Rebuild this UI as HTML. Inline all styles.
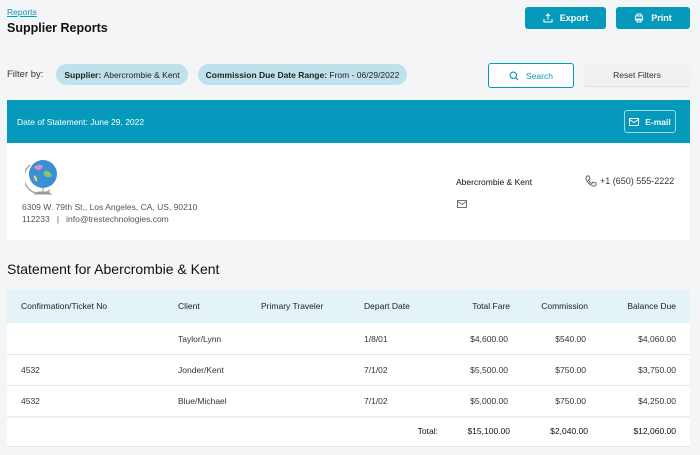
<!DOCTYPE html>
<html><head><style>
*{margin:0;padding:0;box-sizing:border-box}
body{width:700px;height:455px;background:#f4f5f7;font-family:"Liberation Sans",sans-serif;position:relative;overflow:hidden;color:#222}
.a{position:absolute;white-space:nowrap}
.btn{position:absolute;background:#0599bc;color:#fff;border-radius:3px;font-size:9px;font-weight:bold;display:flex;align-items:center;justify-content:center;gap:7px}
.chip{position:absolute;top:64px;height:21px;background:#bfe1ec;border-radius:11px;font-size:8.5px;display:flex;align-items:center;justify-content:center;color:#222}
.t{font-size:8.5px;color:#333}
.r{text-align:right}
.line{position:absolute;left:7px;width:683px;height:1px;background:#e4e7ea}
</style></head><body>
<div class="a" style="left:7px;top:7px;font-size:8.5px;color:#0599bc;text-decoration:underline">Reports</div>
<div class="a" style="left:7px;top:21px;font-size:12.5px;font-weight:bold;color:#111">Supplier Reports</div>
<div class="btn" style="left:525px;top:7px;width:81px;height:22px"><svg width="10" height="10" viewBox="0 0 10 10" fill="none" stroke="#fff" stroke-width="1"><path d="M5 7V1M3 3L5 1L7 3M1 6V9H9V6"/></svg>Export</div>
<div class="btn" style="left:616px;top:7px;width:74px;height:22px"><svg width="10" height="10" viewBox="0 0 10 10" fill="none" stroke="#fff" stroke-width="1"><path d="M3 3V1H7V3M1.5 3H8.5V7H1.5ZM3 6H7V9H3Z"/></svg>Print</div>
<div class="a" style="left:7px;top:69px;font-size:9.5px;color:#333">Filter by:</div>
<div class="chip" style="left:56px;width:132px"><b>Supplier:</b>&nbsp;Abercrombie &amp; Kent</div>
<div class="chip" style="left:198px;width:209px"><b>Commission Due Date Range:</b>&nbsp;From - 06/29/2022</div>
<div class="a" style="left:488px;top:63px;width:86px;height:25px;border:1.3px solid #0599bc;border-radius:3px;background:#fff;color:#0599bc;font-size:8.5px;display:flex;align-items:center;justify-content:center;gap:7px"><svg width="10" height="10" viewBox="0 0 10 10" fill="none" stroke="#0599bc" stroke-width="1.1"><circle cx="4.3" cy="4.3" r="3.2"/><path d="M6.7 6.7L9 9"/></svg>Search</div>
<div class="a" style="left:584px;top:64px;width:106px;height:22px;background:#f0f1f3;border-radius:3px;box-shadow:0 1px 1px #ddd;font-size:8.5px;display:flex;align-items:center;justify-content:center;color:#333">Reset Filters</div>
<div class="a" style="left:7px;top:100px;width:683px;height:43px;background:#0599bc"></div>
<div class="a" style="left:17px;top:117px;font-size:8.5px;color:#fff">Date of Statement: June 29, 2022</div>
<div class="a" style="left:624px;top:110px;width:52px;height:23px;border:1px solid #9fd6e6;border-radius:3px;color:#fff;font-size:8.5px;font-weight:bold;display:flex;align-items:center;justify-content:center;gap:6px"><svg width="10" height="8" viewBox="0 0 10 8" fill="none" stroke="#fff" stroke-width="1"><rect x=".5" y=".5" width="9" height="7"/><path d="M.5 1.5L5 4.5L9.5 1.5"/></svg>E-mail</div>
<div class="a" style="left:7px;top:143px;width:683px;height:97px;background:#fff"></div>
<svg class="a" style="left:25px;top:157px" width="34" height="40" viewBox="0 0 34 40"><circle cx="18" cy="17" r="14" fill="#3a8fd6"/><path d="M9 10Q14 6 18 9Q16 14 12 13Z" fill="#d98fc4"/><path d="M19 14Q25 13 27 19Q22 22 19 18Z" fill="#8bc46a"/><path d="M9 18Q13 20 12 25Q8 22 9 18Z" fill="#e8d46a"/><path d="M5 8A16 16 0 0 0 25 33" fill="none" stroke="#aaa" stroke-width="1.5"/><path d="M18 31V35M10 37H26L23 35H13Z" fill="#999" stroke="#999"/></svg>
<div class="a t" style="left:22px;top:202px;color:#555">6309 W. 79th St., Los Angeles, CA, US, 90210</div>
<div class="a t" style="left:22px;top:214px;color:#555">112233 &nbsp;&nbsp;|&nbsp;&nbsp; info@trestechnologies.com</div>
<div class="a t" style="left:456px;top:177px;color:#111">Abercrombie &amp; Kent</div>
<svg class="a" style="left:585px;top:175px" width="12" height="12" viewBox="0 0 12 12" fill="none" stroke="#555" stroke-width="0.9"><path d="M2 1L4 1L5 4L3.5 5Q5 8 7 8.5L8 7L11 8L11 10Q10 11.5 8 11Q2 8.5 1 3Q1 1.5 2 1Z"/></svg>
<div class="a" style="left:600px;top:176px;font-size:9px;color:#333">+1 (650) 555-2222</div>
<svg class="a" style="left:457px;top:200px" width="10" height="8" viewBox="0 0 10 8" fill="none" stroke="#666" stroke-width="0.9"><rect x=".5" y=".5" width="9" height="7"/><path d="M.5 1.5L5 4.5L9.5 1.5"/></svg>
<div class="a" style="left:7px;top:261px;font-size:14px;color:#111">Statement for Abercrombie &amp; Kent</div>
<div class="a" style="left:7px;top:290px;width:683px;height:33px;background:#e4f3f7"></div>
<div class="a" style="left:7px;top:323px;width:683px;height:123px;background:#fff"></div>
<div class="line" style="top:354px"></div><div class="line" style="top:385px"></div><div class="line" style="top:416px;height:2px;background:#eef0f2"></div><div class="line" style="top:446px"></div>
<div class="a t" style="left:21px;top:301px;color:#222">Confirmation/Ticket No</div>
<div class="a t" style="left:178px;top:301px;color:#222">Client</div>
<div class="a t" style="left:261px;top:301px;color:#222">Primary Traveler</div>
<div class="a t" style="left:364px;top:301px;color:#222">Depart Date</div>
<div class="a t r" style="right:190px;top:301px;color:#222">Total Fare</div>
<div class="a t r" style="right:112px;top:301px;color:#222">Commission</div>
<div class="a t r" style="right:24px;top:301px;color:#222">Balance Due</div>

<div class="a t" style="left:178px;top:334px">Taylor/Lynn</div>
<div class="a t" style="left:364px;top:334px">1/8/01</div>
<div class="a t" style="right:192px;top:334px">$4,600.00</div>
<div class="a t" style="right:114px;top:334px">$540.00</div>
<div class="a t" style="right:24px;top:334px">$4,060.00</div>

<div class="a t" style="left:21px;top:365px">4532</div>
<div class="a t" style="left:178px;top:365px">Jonder/Kent</div>
<div class="a t" style="left:364px;top:365px">7/1/02</div>
<div class="a t" style="right:192px;top:365px">$5,500.00</div>
<div class="a t" style="right:114px;top:365px">$750.00</div>
<div class="a t" style="right:24px;top:365px">$3,750.00</div>

<div class="a t" style="left:21px;top:396px">4532</div>
<div class="a t" style="left:178px;top:396px">Blue/Michael</div>
<div class="a t" style="left:364px;top:396px">7/1/02</div>
<div class="a t" style="right:192px;top:396px">$5,000.00</div>
<div class="a t" style="right:114px;top:396px">$750.00</div>
<div class="a t" style="right:24px;top:396px">$4,250.00</div>

<div class="a t" style="right:262px;top:426px;color:#111">Total:</div>
<div class="a t" style="right:190px;top:426px;color:#111">$15,100.00</div>
<div class="a t" style="right:112px;top:426px;color:#111">$2,040.00</div>
<div class="a t" style="right:24px;top:426px;color:#111">$12,060.00</div>
</body></html>
